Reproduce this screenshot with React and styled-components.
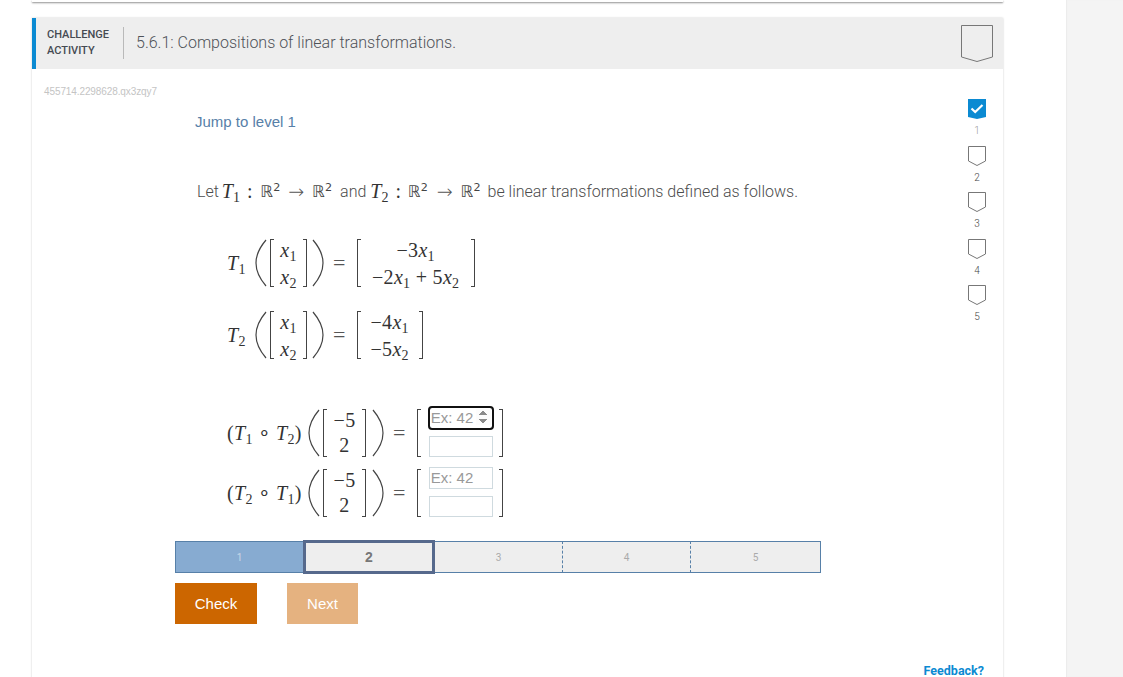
import React from "react";
import styled, { createGlobalStyle } from "styled-components";

const GlobalStyle = createGlobalStyle`
  html, body {
    margin: 0;
    padding: 0;
    height: 677px;
    overflow: hidden;
    background: #fff;
    font-family: Roboto, "Liberation Sans", sans-serif;
  }
`;

const Page = styled.div`
  display: flex;
  width: 1123px;
  height: 677px;
  overflow: hidden;
`;

const MainColumn = styled.div`
  width: 1066px;
  padding-left: 32px;
  box-sizing: border-box;
`;

const SideColumn = styled.div`
  flex: 1;
  background: #f4f4f4;
  box-shadow: inset 1px 0 1px #ececec;
`;

const PrevCardEdge = styled.div`
  width: 971px;
  height: 2px;
  background: #fff;
  box-shadow: 0 1px 2px rgba(0, 0, 0, 0.45);
`;

const Card = styled.div`
  width: 971px;
  margin-top: 16px;
  background: #fff;
  box-shadow: 0 0 2px rgba(0, 0, 0, 0.2);
`;

const Header = styled.div`
  display: flex;
  align-items: center;
  height: 51px;
  background: #eee;
  border-left: 4px solid #0b8ad2;
  padding: 0 10px 0 11px;
`;

const Kind = styled.div`
  width: 76px;
  height: 32px;
  margin-bottom: 2px;
  font-size: 11px;
  font-weight: 500;
  line-height: 16px;
  color: #454a52;
  border-right: 1px solid #b9b9b9;
`;

const Title = styled.div`
  flex: 1;
  padding-left: 12px;
  margin-bottom: 2px;
  font-size: 16px;
  font-weight: 300;
  color: #4e5258;
`;

const Shield = ({ w, h, className }) => (
  <svg className={className} width={w} height={h} viewBox={`0 0 ${w} ${h}`}>
    <path
      d={`M.5 .5H${w - 0.5}V${h - 5}L${w / 2} ${h - 0.5}L.5 ${h - 5}Z`}
      fill="none"
      stroke="#777"
      strokeWidth="1"
    />
  </svg>
);

const Body = styled.div`
  display: flex;
`;

const Content = styled.div`
  flex: 1;
  padding: 17px 0 0 12px;
`;

const SeedId = styled.div`
  font-family: "Liberation Sans", sans-serif;
  font-size: 10px;
  letter-spacing: -0.1px;
  line-height: 12px;
  color: #c4c4c4;
`;

const Activity = styled.div`
  margin: 15px 0 0 131px;
`;

const Jump = styled.div`
  margin-left: 20px;
  font-family: "Liberation Sans", sans-serif;
  font-size: 15px;
  line-height: 18px;
  color: #5780a8;
`;

const Prompt = styled.div`
  margin: 48px 0 0 22px;
  height: 24px;
  display: flex;
  align-items: center;
  white-space: pre;
  font-size: 16px;
  font-weight: 300;
  color: #4c4c4c;
`;

const Words = styled.span`
  margin-left: ${(p) => p.$l || 0}px;
`;

const MathText = styled.span`
  margin-left: ${(p) => p.$l || 0}px;
  font-family: "Liberation Serif", serif;
  font-size: 20px;
  color: #333;
  font-weight: 400;
`;

const Blackboard = styled.span`
  margin-left: ${(p) => p.$l || 0}px;
  font-family: "DejaVu Sans", sans-serif;
  font-size: 16px;
  color: #444;
  font-weight: 400;
`;

const Arrow = styled.span`
  margin-left: ${(p) => p.$l || 0}px;
  font-family: "DejaVu Sans", sans-serif;
  font-size: 19px;
  line-height: 20px;
  color: #555;
`;

const Var = styled.i`
  font-family: "Liberation Serif", serif;
  font-style: italic;
`;

const Sub = styled.sub`
  font-size: 0.7em;
  line-height: 0;
  font-style: normal;
  vertical-align: -0.25em;
`;

const Sup = styled.sup`
  font-size: 0.7em;
  line-height: 0;
  vertical-align: 0.5em;
`;

const Op = styled.span`
  margin: 0 5px;
`;

const Equations = styled.div`
  margin: 0 0 0 52px;
`;

const Eqn = styled.div`
  display: flex;
  align-items: center;
  height: 48px;
  margin-top: ${(p) => p.$top}px;
  font-family: "Liberation Serif", serif;
  font-size: 20px;
  letter-spacing: 0.3px;
  color: #333;
`;

const Label = styled.div`
  width: ${(p) => p.$w}px;
  white-space: nowrap;
`;

const Equals = styled.div`
  font-size: 22px;
  color: #555;
  margin: 0 11px 0 9px;
`;

const ParenSvg = styled.svg`
  display: block;
  flex: none;
  margin: ${(p) => p.$m};
`;

const Paren = ({ right, m }) => (
  <ParenSvg $m={m} width="12" height="48" viewBox="0 0 12 48">
    <path
      d={
        right
          ? "M1 1C7 8 11 15 11 24C11 33 7 40 1 47"
          : "M11 1C5 8 1 15 1 24C1 33 5 40 11 47"
      }
      fill="none"
      stroke="#444"
      strokeWidth="1.2"
    />
  </ParenSvg>
);

const Matrix = styled.div`
  display: flex;
  align-items: stretch;
  height: 48px;
`;

const Bracket = styled.div`
  width: 4px;
  flex: none;
  box-sizing: border-box;
  border-top: 1px solid #444;
  border-bottom: 1px solid #444;
  ${(p) => (p.$right ? "border-right: 1.5px solid #444;" : "border-left: 1.5px solid #444;")}
`;

const Cells = styled.div`
  display: flex;
  flex-direction: column;
  justify-content: center;
  align-items: center;
  box-sizing: content-box;
  width: ${(p) => p.$w}px;
  padding: ${(p) => (p.$low ? "2px 3px 0" : "0 3px")};
  white-space: nowrap;
  line-height: ${(p) => (p.$low ? 27 : 25)}px;
`;

const InputCells = styled.div`
  display: flex;
  flex-direction: column;
  gap: 7px;
  margin: -2px 6px 0 8px;
`;

const Answer = styled.input`
  width: 64px;
  height: 22px;
  box-sizing: border-box;
  padding: 0 1px;
  margin: 0;
  background: #fff;
  border: 1px solid #cfdadf;
  border-radius: ${(p) => (p.$focused ? "3px" : "0")};
  outline: ${(p) => (p.$focused ? "2px solid #111" : "none")};
  outline-offset: -1px;
  font-family: "Liberation Sans", sans-serif;
  font-size: 15px;
  color: #333;

  &::placeholder {
    color: #999;
    opacity: 1;
  }
  &::-webkit-inner-spin-button {
    opacity: ${(p) => (p.$focused ? 1 : 0)};
  }
`;

const LevelBar = styled.div`
  display: flex;
  align-items: center;
  width: 646px;
  height: 32px;
  margin-top: 24px;
`;

const Segment = styled.div`
  flex: none;
  width: ${(p) => p.$w}px;
  box-sizing: border-box;
  height: ${(p) => (p.$current ? 34 : 32)}px;
  display: flex;
  align-items: center;
  justify-content: center;
  font-family: ${(p) => (p.$current ? '"Liberation Sans"' : "Roboto")}, sans-serif;
  font-size: ${(p) => (p.$current ? 14 : 10)}px;
  font-weight: ${(p) => (p.$current ? 700 : 400)};
  color: ${(p) => (p.$done ? "#c9d8e8" : p.$current ? "#777" : "#aaa")};
  background: ${(p) => (p.$done ? "#87abd1" : "#eee")};
  border: 1px solid #5780a8;
  border-left-style: ${(p) => (p.$dash ? "dashed" : "solid")};
  border-left-width: ${(p) => (p.$noLeft ? 0 : 1)}px;
  border-right-width: ${(p) => (p.$end ? 1 : 0)}px;
  ${(p) => p.$current && "border: 3px solid #56698c;"}
`;

const Buttons = styled.div`
  display: flex;
  gap: 30px;
  margin-top: 10px;
`;

const Button = styled.button`
  height: 41px;
  width: ${(p) => p.$w}px;
  border: 0;
  padding: 0;
  font-family: "Liberation Sans", sans-serif;
  font-size: 15px;
  color: #fff;
  background: ${(p) => (p.$muted ? "#e5b280" : "#cc6600")};
`;

const Levels = styled.div`
  flex: none;
  width: 18px;
  margin: 30px 17px 0 0;
  display: flex;
  flex-direction: column;
`;

const LevelItem = styled.div`
  height: 46.5px;
  display: flex;
  flex-direction: column;
  align-items: center;
`;

const LevelNum = styled.div`
  margin-top: 6px;
  font-size: 10px;
  font-weight: 300;
  line-height: 12px;
  color: ${(p) => (p.$done ? "#999" : "#444")};
`;

const Footer = styled.div`
  margin-top: 40px;
  padding: 0 19px 20px 0;
  text-align: right;
  font-size: 12.5px;
  line-height: 14px;
  font-weight: 700;
  color: #0b8ad2;
`;

const CheckedIcon = () => (
  <svg width="18" height="20" viewBox="0 0 18 20">
    <path d="M0 0H18V18L9 20L0 18Z" fill="#0b8ad2" />
    <path
      d="M3.5 9.5L7.2 13L14.5 6"
      fill="none"
      stroke="#fff"
      strokeWidth="2.2"
    />
  </svg>
);

const T = ({ n }) => (
  <Var>
    T<Sub>{n}</Sub>
  </Var>
);

const X = ({ n }) => (
  <Var>
    x<Sub>{n}</Sub>
  </Var>
);

const Sq = ({ l }) => (
  <Blackboard $l={l}>
    ℝ<Sup>2</Sup>
  </Blackboard>
);

const Vec = ({ top, bottom, w, low }) => (
  <Matrix>
    <Bracket />
    <Cells $w={w} $low={low}>
      <div>{top}</div>
      <div>{bottom}</div>
    </Cells>
    <Bracket $right />
  </Matrix>
);

const Applied = ({ top, bottom, w, gap, low }) => (
  <>
    <Paren m="0 3px 0 0" />
    <Vec top={top} bottom={bottom} w={w} low={low} />
    <Paren right m={`0 0 0 ${gap}px`} />
  </>
);

const AnswerVec = ({ first, focused }) => (
  <Matrix>
    <Bracket />
    <InputCells>
      <Answer type="number" placeholder={first} $focused={focused} />
      <Answer type="number" />
    </InputCells>
    <Bracket $right />
  </Matrix>
);

const segments = [
  { n: 1, w: 128, $done: true },
  { n: 2, w: 132, $current: true },
  { n: 3, w: 127, $noLeft: true },
  { n: 4, w: 128, $dash: true },
  { n: 5, w: 131, $dash: true, $end: true },
];

const App = () => {
  return (
    <Page>
      <GlobalStyle />
      <MainColumn>
        <PrevCardEdge />
        <Card>
          <Header>
            <Kind>
              CHALLENGE
              <br />
              ACTIVITY
            </Kind>
            <Title>5.6.1: Compositions of linear transformations.</Title>
            <Shield w={32} h={37} />
          </Header>
          <Body>
            <Content>
              <SeedId>455714.2298628.qx3zqy7</SeedId>
              <Activity>
                <Jump>Jump to level 1</Jump>
                <Prompt>
                  <Words>Let</Words>
                  <MathText $l={3}>
                    <T n={1} />
                  </MathText>
                  <MathText $l={7}>:</MathText>
                  <Sq l={8} />
                  <Arrow $l={8}>→</Arrow>
                  <Sq l={8} />
                  <Words $l={8}>and</Words>
                  <MathText $l={4}>
                    <T n={2} />
                  </MathText>
                  <MathText $l={7}>:</MathText>
                  <Sq l={7} />
                  <Arrow $l={9}>→</Arrow>
                  <Sq l={8} />
                  <Words $l={7}>be linear transformations defined as follows.</Words>
                </Prompt>
                <Equations>
                  <Eqn $top={36}>
                    <Label $w={28}>
                      <T n={1} />
                    </Label>
                    <Applied top={<X n={1} />} bottom={<X n={2} />} w={23} gap={5} low />
                    <Equals>=</Equals>
                    <Vec
                      top={<>−3<X n={1} /></>}
                      bottom={<>−2<X n={1} /> + 5<X n={2} /></>}
                      w={104}
                      low
                    />
                  </Eqn>
                  <Eqn $top={24}>
                    <Label $w={28}>
                      <T n={2} />
                    </Label>
                    <Applied top={<X n={1} />} bottom={<X n={2} />} w={23} gap={5} low />
                    <Equals>=</Equals>
                    <Vec
                      top={<>−4<X n={1} /></>}
                      bottom={<>−5<X n={2} /></>}
                      w={52}
                      low
                    />
                  </Eqn>
                  <Eqn $top={50}>
                    <Label $w={81}>
                      (<T n={1} /><Op>∘</Op><T n={2} />)
                    </Label>
                    <Applied top="−5" bottom="2" w={29} gap={6} />
                    <Equals>=</Equals>
                    <AnswerVec first="Ex: 42" focused />
                  </Eqn>
                  <Eqn $top={12}>
                    <Label $w={81}>
                      (<T n={2} /><Op>∘</Op><T n={1} />)
                    </Label>
                    <Applied top="−5" bottom="2" w={29} gap={6} />
                    <Equals>=</Equals>
                    <AnswerVec first="Ex: 42" />
                  </Eqn>
                </Equations>
                <LevelBar>
                  {segments.map(({ n, w, ...rest }) => (
                    <Segment key={n} $w={w} {...rest}>
                      {n}
                    </Segment>
                  ))}
                </LevelBar>
                <Buttons>
                  <Button $w={82}>Check</Button>
                  <Button $w={71} $muted>
                    Next
                  </Button>
                </Buttons>
              </Activity>
            </Content>
            <Levels>
              {[1, 2, 3, 4, 5].map((n) => (
                <LevelItem key={n}>
                  {n === 1 ? <CheckedIcon /> : <Shield w={18} h={20} />}
                  <LevelNum $done={n === 1}>{n}</LevelNum>
                </LevelItem>
              ))}
            </Levels>
          </Body>
          <Footer>Feedback?</Footer>
        </Card>
      </MainColumn>
      <SideColumn />
    </Page>
  );
};

export default App;
